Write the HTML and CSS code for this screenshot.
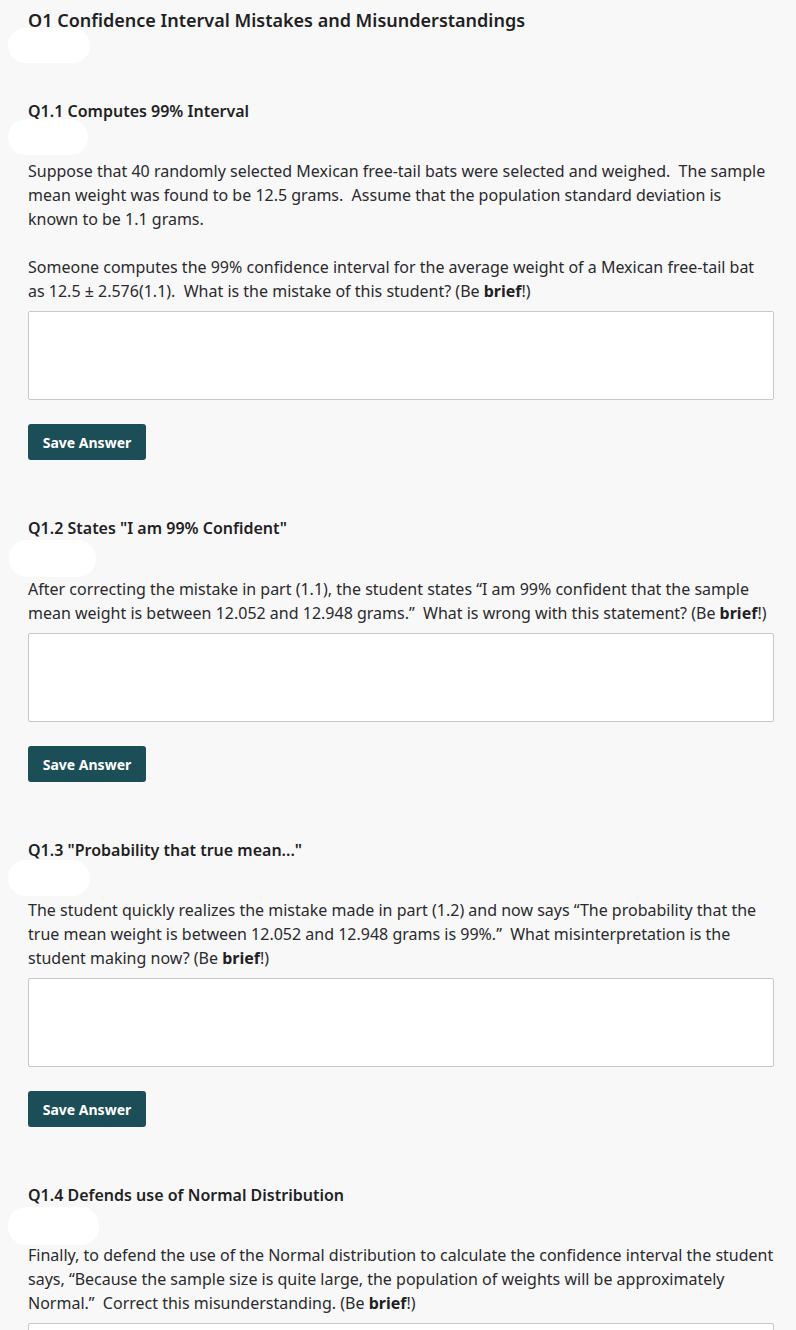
FILE: index.html
```html
<!DOCTYPE html>
<html lang="en">
<head>
<meta charset="utf-8">
<title>Q1 Confidence Interval Mistakes and Misunderstandings</title>
<link rel="stylesheet" href="styles.css">
</head>
<body>
<main class="page">
  <h1 class="title">O1 Confidence Interval Mistakes and Misunderstandings</h1>
  <span class="blob blob-title"></span>

  <section class="question">
    <h2 class="q-head">Q1.1 Computes 99% Interval</h2>
    <span class="blob blob-a"></span>
    <p class="q-text">Suppose that 40 randomly selected Mexican free-tail bats were selected and weighed.&nbsp; The sample mean weight was found to be 12.5 grams.&nbsp; Assume that the population standard deviation is known to be 1.1 grams.</p>
    <p class="q-text q-text-next">Someone computes the 99% confidence interval for the average weight of a Mexican free-tail bat as 12.5 ± 2.576(1.1).&nbsp; What is the mistake of this student? (Be <b>brief</b>!)</p>
    <textarea class="answer" aria-label="Answer 1.1"></textarea>
    <button class="save" type="button">Save Answer</button>
  </section>

  <section class="question">
    <h2 class="q-head">Q1.2 States "I am 99% Confident"</h2>
    <span class="blob blob-b"></span>
    <p class="q-text q-text-lower">After correcting the mistake in part (1.1), the student states “I am 99% confident that the sample mean weight is between 12.052 and 12.948 grams.”&nbsp; What is wrong with this statement? (Be <b>brief</b>!)</p>
    <textarea class="answer" aria-label="Answer 1.2"></textarea>
    <button class="save" type="button">Save Answer</button>
  </section>

  <section class="question">
    <h2 class="q-head">Q1.3 "Probability that true mean..."</h2>
    <span class="blob blob-c"></span>
    <p class="q-text">The student quickly realizes the mistake made in part (1.2) and now says “The probability that the true mean weight is between 12.052 and 12.948 grams is 99%.”&nbsp; What misinterpretation is the student making now? (Be <b>brief</b>!)</p>
    <textarea class="answer" aria-label="Answer 1.3"></textarea>
    <button class="save" type="button">Save Answer</button>
  </section>

  <section class="question">
    <h2 class="q-head">Q1.4 Defends use of Normal Distribution</h2>
    <span class="blob blob-d"></span>
    <p class="q-text">Finally, to defend the use of the Normal distribution to calculate the confidence interval the student says, “Because the sample size is quite large, the population of weights will be approximately Normal.”&nbsp; Correct this misunderstanding. (Be <b>brief</b>!)</p>
    <textarea class="answer" aria-label="Answer 1.4"></textarea>
    <button class="save" type="button">Save Answer</button>
  </section>
</main>
</body>
</html>
```

FILE: styles.css
```css
html, body {
  margin: 0;
  padding: 0;
  background: #f8f8f8;
}

body {
  font-family: "Noto Sans", "Open Sans", sans-serif;
  color: #1f1f24;
}

.page {
  position: relative;
  padding: 7px 22px 40px 28px;
}

.title {
  margin: 0;
  font-size: 18px;
  line-height: 26px;
  font-weight: 600;
}

.question {
  position: relative;
  margin-top: 57px;
}

.question:first-of-type {
  margin-top: 67px;
}

.q-head {
  margin: 0;
  font-size: 16px;
  line-height: 22px;
  font-weight: 600;
}

.q-text {
  margin: 37px 0 0;
  font-size: 16px;
  line-height: 24px;
  color: #2a2a2e;
}

.q-text b {
  font-weight: 700;
  color: #1f1f24;
}

.q-text-next {
  margin-top: 24px;
}

.q-text-lower {
  margin-top: 38px;
}

.answer {
  display: block;
  box-sizing: border-box;
  width: 100%;
  height: 89px;
  margin: 8px 0 0;
  padding: 6px 8px;
  border: 1px solid #c8c8c8;
  border-radius: 2px;
  background: #ffffff;
  resize: none;
  font: inherit;
}

.save {
  display: block;
  margin-top: 24px;
  width: 118px;
  height: 36px;
  padding: 0;
  border: none;
  border-radius: 3px;
  background: #1c4e57;
  color: #ffffff;
  font-family: "Noto Sans", "Open Sans", sans-serif;
  font-size: 14px;
  font-weight: 700;
  cursor: pointer;
}

/* white redaction pills laid over the page */
.blob {
  position: absolute;
  left: -20px;
  height: 36px;
  border-radius: 18px;
  background: #ffffff;
  filter: blur(0.6px);
}

.blob-title {
  top: 28px;
  left: 8px;
  width: 82px;
  height: 35px;
}

.blob-a { top: 19px; width: 80px; }
.blob-b { top: 23px; width: 87px; left: -19px; height: 37px; }
.blob-c { top: 21px; width: 82px; }
.blob-d { top: 23px; width: 91px; height: 38px; }
```
